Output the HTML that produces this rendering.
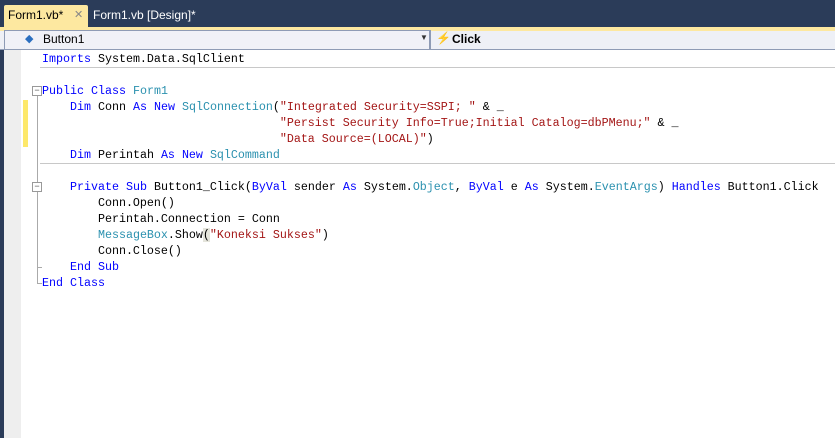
<!DOCTYPE html>
<html><head><style>
body{margin:0;width:835px;height:438px;overflow:hidden;background:#fff;font-family:"Liberation Sans",sans-serif;position:relative}
.abs{position:absolute}
.code{position:absolute;left:42px;font-family:"Liberation Mono",monospace;font-size:11.67px;white-space:pre;color:#000;line-height:16px}
.k{color:#0000ff}.t{color:#2b91af}.s{color:#a31515}
</style></head><body>
<div class="abs" style="left:0;top:0;width:835px;height:27px;background:#2b3c59"></div>
<div class="abs" style="left:0;top:27px;width:835px;height:4px;background:#fde8a0"></div>
<div class="abs" style="left:4px;top:5px;width:84px;height:24px;background:#fde8a0;border-radius:2px 2px 0 0"></div>
<div class="abs" style="left:8px;top:8px;font-size:12px;color:#000">Form1.vb*</div>
<div class="abs" style="left:74px;top:8px;font-size:11px;color:#888">✕</div>
<div class="abs" style="left:93px;top:8px;font-size:12px;color:#fff">Form1.vb [Design]*</div>
<div class="abs" style="left:0;top:31px;width:835px;height:18px;background:#eef0f6;border-bottom:1px solid #8e9bb5"></div>
<div class="abs" style="left:4px;top:30px;width:424px;height:18px;border:1px solid #8e9bb5;background:#f0f1f7"></div>
<div class="abs" style="left:430px;top:30px;width:1px;height:20px;background:#8e9bb5"></div>
<div class="abs" style="left:25px;top:32px;font-size:11px;color:#2b6fc0">◆</div>
<div class="abs" style="left:43px;top:32px;font-size:12px">Button1</div>
<div class="abs" style="left:420px;top:33px;font-size:8px;color:#333">▼</div>
<div class="abs" style="left:436px;top:31px;font-size:12px;color:#e0a030">⚡</div>
<div class="abs" style="left:452px;top:32px;font-size:12px;font-weight:bold">Click</div>
<div class="abs" style="left:0;top:50px;width:4px;height:388px;background:#2b3c59"></div>
<div class="abs" style="left:4px;top:50px;width:17px;height:388px;background:#eeeeee"></div>
<div class="abs" style="left:23px;top:100px;width:5px;height:47px;background:#fde86a"></div>
<div class="abs" style="left:40px;top:67px;width:795px;height:1px;background:#c8c8c8"></div>
<div class="abs" style="left:40px;top:163px;width:795px;height:1px;background:#c8c8c8"></div>
<div class="abs" style="left:32px;top:86px;width:8px;height:8px;border:1px solid #999;background:#fff;font-size:9px;line-height:7px;text-align:center;color:#555">−</div>
<div class="abs" style="left:37px;top:96px;width:1px;height:188px;background:#aaa"></div>
<div class="abs" style="left:37px;top:283px;width:5px;height:1px;background:#aaa"></div>
<div class="abs" style="left:32px;top:182px;width:8px;height:8px;border:1px solid #999;background:#fff;font-size:9px;line-height:7px;text-align:center;color:#555">−</div>
<div class="abs" style="left:37px;top:267px;width:5px;height:1px;background:#aaa"></div>
<div class="code" style="top:51px"><span class="k">Imports</span> System.Data.SqlClient

<span class="k">Public</span> <span class="k">Class</span> <span class="t">Form1</span>
    <span class="k">Dim</span> Conn <span class="k">As</span> <span class="k">New</span> <span class="t">SqlConnection</span>(<span class="s">"Integrated Security=SSPI; "</span> &amp; _
                                  <span class="s">"Persist Security Info=True;Initial Catalog=dbPMenu;"</span> &amp; _
                                  <span class="s">"Data Source=(LOCAL)"</span>)
    <span class="k">Dim</span> Perintah <span class="k">As</span> <span class="k">New</span> <span class="t">SqlCommand</span>

    <span class="k">Private</span> <span class="k">Sub</span> Button1_Click(<span class="k">ByVal</span> sender <span class="k">As</span> System.<span class="t">Object</span>, <span class="k">ByVal</span> e <span class="k">As</span> System.<span class="t">EventArgs</span>) <span class="k">Handles</span> Button1.Click
        Conn.Open()
        Perintah.Connection = Conn
        <span class="t">MessageBox</span>.Show<span style="background:#e5e5dc">(</span><span class="s">"Koneksi Sukses"</span>)
        Conn.Close()
    <span class="k">End</span> <span class="k">Sub</span>
<span class="k">End</span> <span class="k">Class</span></div>
</body></html>
